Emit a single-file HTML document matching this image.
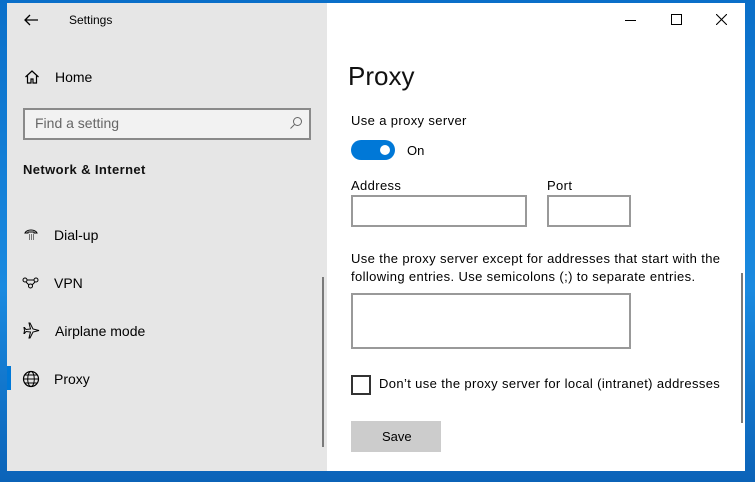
<!DOCTYPE html>
<html><head><style>
body{margin:0;width:755px;height:482px;overflow:hidden;background:linear-gradient(180deg,#0a6fc9 0%,#1a8ae0 60%,#0b63b8 100%);font-family:"Liberation Sans",sans-serif;position:relative}
.a{position:absolute}
.side{left:7px;top:3px;width:320px;height:468px;background:#e6e6e6}
.main{left:327px;top:3px;width:418px;height:468px;background:#fff}
.t{position:absolute;color:#000;white-space:nowrap}
.box{position:absolute;border:2px solid #999;box-sizing:border-box;background:#fff}
.ls{letter-spacing:0.37px}
</style></head><body>
<div class="a side"></div>
<div class="a main"></div>
<!-- sidebar -->
<svg class="a" style="left:22px;top:12px" width="18" height="16" viewBox="0 0 18 16"><path d="M16 8H3M8 3L3 8l5 5" stroke="#000" stroke-width="1.3" fill="none"/></svg>
<div class="t" style="left:69px;top:13px;font-size:12px">Settings</div>
<svg class="a" style="left:24px;top:69px" width="16" height="16" viewBox="0 0 16 16"><path d="M1.5 8L8 2l6.5 6M3.5 6.5V14h3.5v-4h2v4h3.5V6.5" stroke="#000" stroke-width="1.2" fill="none"/></svg>
<div class="t" style="left:55px;top:69px;font-size:14px">Home</div>
<div class="box" style="left:23px;top:108px;width:288px;height:32px;border-color:#8a8a8a;background:#f2f2f2"></div>
<div class="t" style="left:35px;top:115px;font-size:14px;color:#666">Find a setting</div>
<svg class="a" style="left:289px;top:116px" width="14" height="14" viewBox="0 0 14 14"><circle cx="8.5" cy="5.5" r="4" stroke="#666" fill="none"/><path d="M5.5 8.5L1.5 12.5" stroke="#666"/></svg>
<div class="t" style="left:23px;top:162px;font-size:13px;font-weight:bold;color:#111;letter-spacing:0.4px">Network &amp; Internet</div>
<svg class="a" style="left:23px;top:228px" width="16" height="14" viewBox="0 0 16 14"><path d="M2 5C4 1 12 1 14 5H11V4H5V5Z" stroke="#000" fill="none"/><path d="M6 7h1M8 7h1M10 7h1M6 9h1M8 9h1M10 9h1M6 11h1M8 11h1M10 11h1" stroke="#000"/></svg>
<div class="t" style="left:54px;top:227px;font-size:14px">Dial-up</div>
<svg class="a" style="left:22px;top:276px" width="17" height="14" viewBox="0 0 17 14"><circle cx="3" cy="4" r="2" stroke="#000" fill="none"/><circle cx="14" cy="4" r="2" stroke="#000" fill="none"/><circle cx="8.5" cy="10" r="2" stroke="#000" fill="none"/><path d="M5 4h7M4 6l3 3M13 6l-3 3" stroke="#000"/></svg>
<div class="t" style="left:54px;top:275px;font-size:14px">VPN</div>
<svg class="a" style="left:23px;top:322px" width="17" height="17" viewBox="0 0 17 17"><path d="M16 8.5L10 7 7 1H6l1.5 6L3 7.5 1.5 5.5H1l.5 3-.5 3h.5L3 9.5 7.5 10 6 16h1l3-6z" stroke="#000" fill="none"/></svg>
<div class="t" style="left:55px;top:323px;font-size:14px">Airplane mode</div>
<div class="a" style="left:7px;top:366px;width:4px;height:24px;background:#0078d7"></div>
<svg class="a" style="left:22px;top:370px" width="18" height="18" viewBox="0 0 18 18"><circle cx="9" cy="9" r="7.5" stroke="#000" stroke-width="1.2" fill="none"/><ellipse cx="9" cy="9" rx="3.3" ry="7.5" stroke="#000" fill="none"/><path d="M1.5 9h15M3 5h12M3 13h12" stroke="#000"/></svg>
<div class="t" style="left:54px;top:371px;font-size:14px">Proxy</div>
<div class="a" style="left:322px;top:277px;width:2px;height:170px;background:#7a7a7a"></div>
<!-- titlebar controls -->
<div class="a" style="left:625px;top:20px;width:11px;height:1px;background:#000"></div>
<div class="a" style="left:671px;top:14px;width:9px;height:9px;border:1px solid #000"></div>
<svg class="a" style="left:716px;top:14px" width="11" height="11" viewBox="0 0 11 11"><path d="M0 0L11 11M11 0L0 11" stroke="#000" stroke-width="1.1"/></svg>
<!-- main -->
<div class="t" style="left:348px;top:61px;font-size:26px;color:#111">Proxy</div>
<div class="t ls" style="left:351px;top:113px;font-size:13px">Use a proxy server</div>
<div class="a" style="left:351px;top:140px;width:44px;height:20px;border-radius:10px;background:#0078d7"></div>
<div class="a" style="left:380px;top:145px;width:10px;height:10px;border-radius:5px;background:#fff"></div>
<div class="t" style="left:407px;top:143px;font-size:13px">On</div>
<div class="t ls" style="left:351px;top:178px;font-size:13px">Address</div>
<div class="t ls" style="left:547px;top:178px;font-size:13px">Port</div>
<div class="box" style="left:351px;top:195px;width:176px;height:32px"></div>
<div class="box" style="left:547px;top:195px;width:84px;height:32px"></div>
<div class="t ls" style="left:351px;top:250px;font-size:13px;line-height:18px">Use the proxy server except for addresses that start with the<br>following entries. Use semicolons (;) to separate entries.</div>
<div class="box" style="left:351px;top:293px;width:280px;height:56px"></div>
<div class="a" style="left:351px;top:375px;width:20px;height:20px;border:2px solid #333;box-sizing:border-box"></div>
<div class="t ls" style="left:379px;top:376px;font-size:13px">Don’t use the proxy server for local (intranet) addresses</div>
<div class="a" style="left:351px;top:421px;width:90px;height:31px;background:#ccc"></div>
<div class="t" style="left:382px;top:429px;font-size:13px">Save</div>
<div class="a" style="left:741px;top:273px;width:2px;height:150px;background:#7a7a7a"></div>
</body></html>
